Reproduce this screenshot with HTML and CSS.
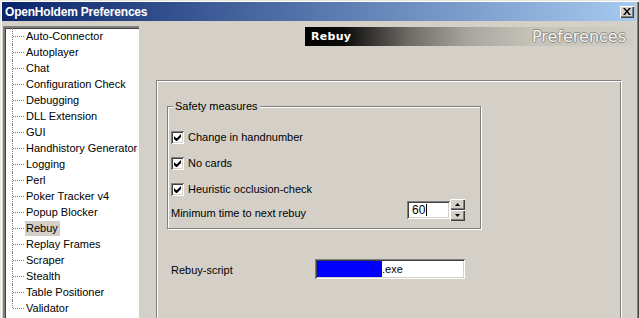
FILE: index.html
```html
<!DOCTYPE html>
<html lang="en">
<head>
    <meta charset="UTF-8">
    <meta name="viewport" content="width=device-width, initial-scale=1.0">
    <title>OpenHoldem Preferences</title>
    <link rel="stylesheet" href="styles.css">
</head>
<body>
    <div class="window">
        <div class="titlebar">
            <span class="title">OpenHoldem Preferences</span>
            <span class="close">
                <svg width="8" height="7" viewBox="0 0 8 7"><path d="M0 0h2l2 2.5L6 0h2L5 3.5 8 7H6L4 4.5 2 7H0l3-3.5z" fill="#000"/></svg>
            </span>
        </div>
        <div class="client">
            <ul class="tree">
                <li><span>Auto-Connector</span></li>
                <li><span>Autoplayer</span></li>
                <li><span>Chat</span></li>
                <li><span>Configuration Check</span></li>
                <li><span>Debugging</span></li>
                <li><span>DLL Extension</span></li>
                <li><span>GUI</span></li>
                <li><span>Handhistory Generator</span></li>
                <li><span>Logging</span></li>
                <li><span>Perl</span></li>
                <li><span>Poker Tracker v4</span></li>
                <li><span>Popup Blocker</span></li>
                <li><span class="selected">Rebuy</span></li>
                <li><span>Replay Frames</span></li>
                <li><span>Scraper</span></li>
                <li><span>Stealth</span></li>
                <li><span>Table Positioner</span></li>
                <li class="last"><span>Validator</span></li>
            </ul>
            <div class="page">
                <div class="banner">
                    <span class="banner-title">Rebuy</span>
                    <span class="banner-sub">Preferences</span>
                </div>
                <div class="frame">
                    <div class="group">
                        <span class="legend">Safety measures</span>
                        <div class="check-row">
                            <span class="checkbox"><svg width="13" height="13" viewBox="0 0 13 13"><path d="M3 5L5 7H6L10 3V6L6 10H5L3 8Z" fill="#000"/></svg></span>
                            Change in handnumber
                        </div>
                        <div class="check-row">
                            <span class="checkbox"><svg width="13" height="13" viewBox="0 0 13 13"><path d="M3 5L5 7H6L10 3V6L6 10H5L3 8Z" fill="#000"/></svg></span>
                            No cards
                        </div>
                        <div class="check-row">
                            <span class="checkbox"><svg width="13" height="13" viewBox="0 0 13 13"><path d="M3 5L5 7H6L10 3V6L6 10H5L3 8Z" fill="#000"/></svg></span>
                            Heuristic occlusion-check
                        </div>
                        <div class="spin-row">
                            <span class="spin-label">Minimum time to next rebuy</span>
                            <div class="spin-edit">
                                <span class="edit edit-small">60<i class="caret"></i></span>
                                <span class="spin">
                                    <span class="spin-btn"><svg width="5" height="3" viewBox="0 0 5 3"><path d="M2.5 0L5 3H0z" fill="#000"/></svg></span>
                                    <span class="spin-btn"><svg width="5" height="3" viewBox="0 0 5 3"><path d="M0 0H5L2.5 3z" fill="#000"/></svg></span>
                                </span>
                            </div>
                        </div>
                    </div>
                    <div class="script-row">
                        <span class="script-label">Rebuy-script</span>
                        <span class="edit edit-wide"><span class="selection"></span>.exe</span>
                    </div>
                </div>
            </div>
        </div>
    </div>
</body>
</html>
```

FILE: styles.css
```css
body {
    margin: 0;
    background: #d4d0c8;
    font-family: "Liberation Sans", Arial, sans-serif;
    font-size: 11px;
    color: #000;
}
.window {
    width: 639px;
    height: 318px;
    box-sizing: border-box;
    padding: 2px 3px 0 2px;
    overflow: hidden;
    background: #d4d0c8;
    box-shadow: inset 1px 1px #e8e6e1, inset 2px 2px #fff, inset -1px 0 #404040, inset -2px 0 #808080;
}
.titlebar {
    height: 19px;
    display: flex;
    align-items: center;
    justify-content: space-between;
    padding: 0 2px 0 3px;
    background: linear-gradient(90deg, #0a246a, #a6caf0);
}
.title {
    color: #fff;
    font-weight: bold;
    font-size: 12px;
    letter-spacing: -0.2px;
}
.close {
    width: 14px;
    height: 12px;
    display: flex;
    align-items: center;
    justify-content: center;
    background: #d4d0c8;
    box-shadow: inset 1px 1px #fff, inset -1px -1px #404040, inset -2px -2px #808080;
}
.client {
    display: flex;
    margin-top: 5px;
}

/* tree */
.tree {
    list-style: none;
    margin: 0 0 0 1px;
    padding: 0;
    width: 136px;
    height: 310px;
    box-sizing: border-box;
    overflow: hidden;
    background: #fff;
    border-top: 2px solid #808080;
    border-left: 2px solid #808080;
    box-shadow: inset 1px 1px #404040;
}
.tree li {
    position: relative;
    height: 16px;
    line-height: 16px;
    padding-left: 20px;
    white-space: nowrap;
}
.tree li::before {
    content: "";
    position: absolute;
    left: 8px;
    top: 8px;
    width: 11px;
    border-top: 1px dotted #808080;
}
.tree li::after {
    content: "";
    position: absolute;
    left: 7px;
    top: 0;
    height: 16px;
    border-left: 1px dotted #808080;
}
.tree li.last::after {
    height: 8px;
}
.tree li span {
    display: inline-block;
    line-height: 15px;
    padding: 0 2px 0 1px;
}
.tree li span.selected {
    background: #d4d0c8;
}

/* right side */
.page {
    flex: 1;
}
.banner {
    margin: 1px 3px 0 166px;
    height: 19px;
    display: flex;
    align-items: center;
    justify-content: space-between;
    padding: 0 7px 0 6px;
    background: linear-gradient(90deg, #000 0%, #0c0c0b 12%, #6f6d67 32%, #a9a69f 50%, #c6c3bb 70%, #d0cdc5 100%);
}
.banner-title {
    color: #fff;
    font-family: "DejaVu Sans", Verdana, sans-serif;
    font-weight: bold;
    font-size: 11px;
    letter-spacing: 0.3px;
}
.banner-sub {
    color: #f2f1ec;
    font-family: "DejaVu Sans", Verdana, sans-serif;
    font-size: 16px;
    text-shadow: 1px 0 #8f8c85, -1px 0 #8f8c85, 0 1px #8f8c85, 0 -1px #8f8c85;
}
.frame {
    margin: 34px 14px 0 17px;
    height: 260px;
    padding: 0 0 0 10px;
    border-top: 1px solid #808080;
    border-left: 1px solid #808080;
    border-right: 1px solid #fff;
    box-shadow: inset 1px 1px #fff, inset -1px 0 #808080;
}
.group {
    position: relative;
    margin-top: 25px;
    width: 314px;
    height: 123px;
    box-sizing: border-box;
    padding: 17px 15px 0 3px;
    border: 1px solid #808080;
    box-shadow: inset 1px 1px #fff, 1px 1px #fff;
}
.legend {
    position: absolute;
    left: 5px;
    top: -7px;
    padding: 0 2px;
    line-height: 13px;
    background: #d4d0c8;
}
.check-row {
    display: flex;
    align-items: center;
    height: 26px;
}
.checkbox {
    width: 13px;
    height: 13px;
    margin-right: 4px;
    background: #fff;
    box-shadow: inset 1px 1px #808080, inset -1px -1px #fff, inset 2px 2px #404040, inset -2px -2px #d4d0c8;
}
.checkbox svg {
    display: block;
}
.spin-row {
    display: flex;
    align-items: center;
    justify-content: space-between;
    height: 22px;
    margin-top: -3px;
}
.spin-label {
    margin-top: 6px;
}
.spin-edit {
    display: flex;
    align-items: center;
}
.edit {
    display: flex;
    align-items: center;
    box-sizing: border-box;
    background: #fff;
    box-shadow: inset 1px 1px #808080, inset -1px -1px #fff, inset 2px 2px #404040, inset -2px -2px #d4d0c8;
    font-size: 11px;
}
.edit-small {
    width: 43px;
    height: 18px;
    padding-left: 5px;
    font-size: 12px;
}
.caret {
    width: 1px;
    height: 12px;
    margin-left: 1px;
    background: #000;
}
.spin {
    display: flex;
    flex-direction: column;
}
.spin-btn {
    width: 15px;
    height: 11px;
    box-sizing: border-box;
    display: flex;
    align-items: center;
    justify-content: center;
    background: #d4d0c8;
    box-shadow: inset 1px 1px #fff, inset -1px -1px #404040, inset -2px -2px #808080;
}
.script-row {
    display: flex;
    align-items: center;
    margin: 30px 0 0 4px;
}
.script-label {
    width: 144px;
    margin-top: 2px;
}
.edit-wide {
    width: 150px;
    height: 20px;
    padding: 2px;
}
.selection {
    width: 65px;
    height: 16px;
    background: #0000ff;
}
```
